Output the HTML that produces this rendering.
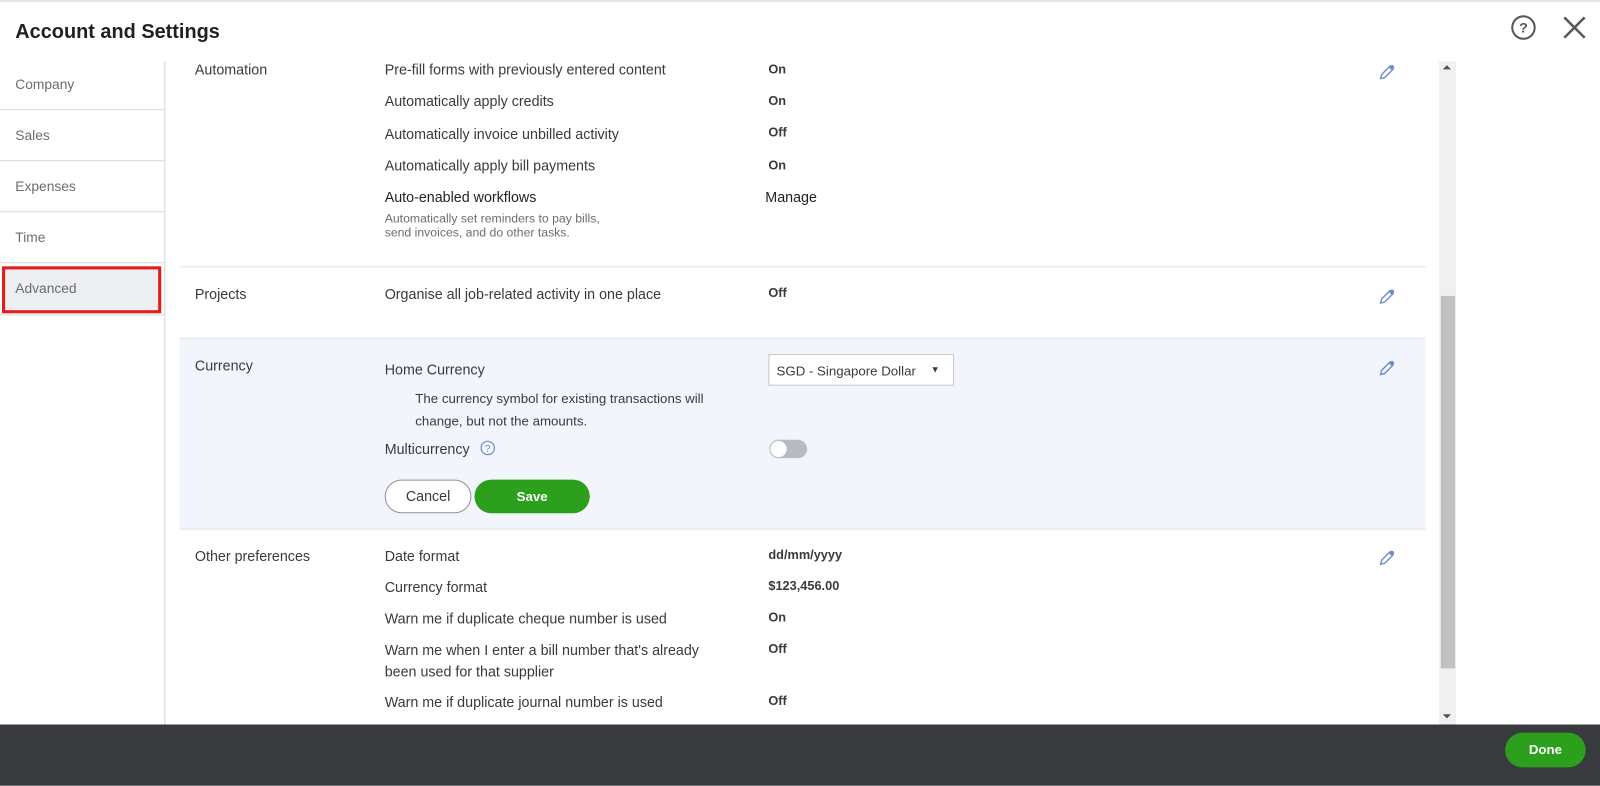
<!DOCTYPE html>
<html><head><meta charset="utf-8"><style>
*{margin:0;padding:0;box-sizing:border-box}
body{width:1600px;height:763px;overflow:hidden;background:#fff;font-family:"Liberation Sans",sans-serif;color:#393a3d;position:relative;font-size:14px}
#w{position:absolute;left:0;top:0;width:1568px;height:748px;transform:scale(1.0204);transform-origin:0 0}
.a{position:absolute;white-space:nowrap}
.nav{position:absolute;left:0;width:161px;height:50px;border-bottom:1px solid #d4d7dc;color:#6b6c72;font-size:13.5px;padding:17px 0 0 15px}
.g{color:#393a3d}
.v{font-size:12.5px;font-weight:bold;color:#393a3d}
.hr{position:absolute;left:176px;width:1221px;height:1px;background:#dcdfe3}
.pen{position:absolute;width:18px;height:18px}
</style></head><body><div id="w">
<div class="a" style="left:0;top:0;width:1600px;height:2px;background:#e6e6e6"></div>
<div class="a" style="left:15px;top:20px;font-size:19.5px;font-weight:bold;color:#1f2024">Account and Settings</div>
<svg class="a" style="left:1480px;top:14px" width="26" height="26" viewBox="0 0 26 26"><circle cx="13" cy="13" r="11" fill="none" stroke="#55575c" stroke-width="2"/><text x="13" y="18" text-anchor="middle" font-family="Liberation Sans" font-weight="bold" font-size="14" fill="#55575c">?</text></svg>
<svg class="a" style="left:1530px;top:14px" width="26" height="26" viewBox="0 0 26 26"><path d="M3 3L23 23M23 3L3 23" stroke="#55575c" stroke-width="2.5"/></svg>
<div class="a" style="left:161px;top:60px;width:1px;height:650px;background:#d4d7dc"></div>
<div class="nav" style="top:58px">Company</div>
<div class="nav" style="top:108px">Sales</div>
<div class="nav" style="top:158px">Expenses</div>
<div class="nav" style="top:208px">Time</div>
<div class="a" style="left:2px;top:261px;width:156px;height:46px;background:#eceef1;border:3px solid #e41b1b;color:#6b6c72;font-size:13.5px;padding:11px 0 0 10px">Advanced</div>
<div class="a" style="left:0;top:308px;width:161px;height:1px;background:#d4d7dc"></div>

<div class="a g" style="left:191px;top:60px">Automation</div>
<div class="a g" style="left:377px;top:60px">Pre-fill forms with previously entered content</div><div class="a v" style="left:753px;top:61px">On</div>
<div class="a g" style="left:377px;top:91px">Automatically apply credits</div><div class="a v" style="left:753px;top:92px">On</div>
<div class="a g" style="left:377px;top:123px">Automatically invoice unbilled activity</div><div class="a v" style="left:753px;top:123px">Off</div>
<div class="a g" style="left:377px;top:154px">Automatically apply bill payments</div><div class="a v" style="left:753px;top:155px">On</div>
<div class="a" style="left:377px;top:185px;color:#1f2024">Auto-enabled workflows</div><div class="a" style="left:750px;top:185px;color:#1f2024">Manage</div>
<div class="a" style="left:377px;top:207px;font-size:12px;line-height:14px;color:#6b6c72">Automatically set reminders to pay bills,<br>send invoices, and do other tasks.</div>
<div class="hr" style="top:261px"></div>
<div class="a g" style="left:191px;top:280px">Projects</div>
<div class="a g" style="left:377px;top:280px">Organise all job-related activity in one place</div><div class="a v" style="left:753px;top:280px">Off</div>
<div class="hr" style="top:331px"></div>
<div class="a" style="left:176px;top:332px;width:1221px;height:186px;background:#f2f6fc"></div>
<div class="a g" style="left:191px;top:350px">Currency</div>
<div class="a g" style="left:377px;top:354px">Home Currency</div>
<div class="a" style="left:407px;top:380px;font-size:13px;line-height:22px">The currency symbol for existing transactions will<br>change, but not the amounts.</div>
<div class="a" style="left:753px;top:347px;width:182px;height:31px;background:#fff;border:1px solid #c4c6ca;font-size:13px;padding:8px 0 0 7px">SGD - Singapore Dollar<span style="position:absolute;right:13px;top:9px;font-size:9px">▼</span></div>
<div class="a g" style="left:377px;top:432px">Multicurrency</div>
<svg class="a" style="left:470px;top:431px" width="16" height="16"><circle cx="8" cy="8" r="6.5" fill="none" stroke="#6b8fc9" stroke-width="1.2"/><text x="8" y="12" text-anchor="middle" font-size="10" fill="#6b8fc9" font-family="Liberation Sans">?</text></svg>
<div class="a" style="left:754px;top:431px;width:37px;height:18px;border-radius:9px;background:#b9bbc0"></div>
<div class="a" style="left:754px;top:431px;width:18px;height:18px;border-radius:50%;background:#fff;border:1px solid #b9bbc0"></div>
<div class="a" style="left:377px;top:470px;width:85px;height:33px;border:1px solid #8d9096;border-radius:17px;background:#fff;font-size:14px;text-align:center;line-height:31px">Cancel</div>
<div class="a" style="left:465px;top:470px;width:113px;height:33px;border-radius:17px;background:#2ca01c;color:#fff;font-weight:bold;font-size:13px;text-align:center;line-height:33px">Save</div>
<div class="hr" style="top:518px"></div>
<div class="a g" style="left:191px;top:537px">Other preferences</div>
<div class="a g" style="left:377px;top:537px">Date format</div><div class="a v" style="left:753px;top:537px">dd/mm/yyyy</div>
<div class="a g" style="left:377px;top:567px">Currency format</div><div class="a v" style="left:753px;top:567px">$123,456.00</div>
<div class="a g" style="left:377px;top:598px">Warn me if duplicate cheque number is used</div><div class="a v" style="left:753px;top:598px">On</div>
<div class="a g" style="left:377px;top:627px;line-height:21px">Warn me when I enter a bill number that's already<br>been used for that supplier</div><div class="a v" style="left:753px;top:629px">Off</div>
<div class="a g" style="left:377px;top:680px">Warn me if duplicate journal number is used</div><div class="a v" style="left:753px;top:680px">Off</div>

<svg class="pen" style="left:1350px;top:62px" viewBox="0 0 18 18"><path d="M3 15l1-4 8-8 3 3-8 8z" fill="none" stroke="#6b8fc9" stroke-width="1.4"/><circle cx="14" cy="4" r="2.3" fill="#6b8fc9"/></svg>
<svg class="pen" style="left:1350px;top:282px" viewBox="0 0 18 18"><path d="M3 15l1-4 8-8 3 3-8 8z" fill="none" stroke="#6b8fc9" stroke-width="1.4"/><circle cx="14" cy="4" r="2.3" fill="#6b8fc9"/></svg>
<svg class="pen" style="left:1350px;top:352px" viewBox="0 0 18 18"><path d="M3 15l1-4 8-8 3 3-8 8z" fill="none" stroke="#6b8fc9" stroke-width="1.4"/><circle cx="14" cy="4" r="2.3" fill="#6b8fc9"/></svg>
<svg class="pen" style="left:1350px;top:538px" viewBox="0 0 18 18"><path d="M3 15l1-4 8-8 3 3-8 8z" fill="none" stroke="#6b8fc9" stroke-width="1.4"/><circle cx="14" cy="4" r="2.3" fill="#6b8fc9"/></svg>

<div class="a" style="left:1410px;top:60px;width:17px;height:650px;background:#f0f0f0"></div>
<div class="a" style="left:1412px;top:290px;width:14px;height:365px;background:#c1c1c1"></div>
<div class="a" style="left:1414px;top:64px;width:0;height:0;border-left:4px solid transparent;border-right:4px solid transparent;border-bottom:4px solid #505050"></div>
<div class="a" style="left:1414px;top:700px;width:0;height:0;border-left:4px solid transparent;border-right:4px solid transparent;border-top:4px solid #505050"></div>
<div class="a" style="left:0;top:710px;width:1600px;height:60px;background:#393a3d"></div>
<div class="a" style="left:1475px;top:718px;width:79px;height:34px;border-radius:17px;background:#2ca01c;color:#fff;font-weight:bold;font-size:13px;text-align:center;line-height:34px">Done</div>
</div></body></html>
